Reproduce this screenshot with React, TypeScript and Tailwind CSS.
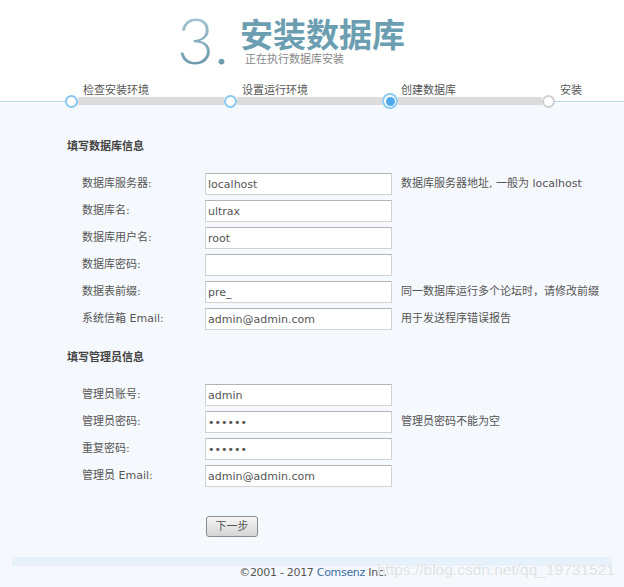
import React from "react";

const font = "font-['DejaVu_Sans','Noto_Sans_CJK_SC',sans-serif]";

function DoneDot() {
  return <div className="w-[13px] h-[13px] flex-none rounded-full border-2 border-[#86c6ef] bg-white" />;
}
function ActiveDot() {
  return (
    <div className="w-[16px] h-[16px] flex-none rounded-full border-2 border-[#8ccbf1] bg-white flex items-center justify-center">
      <div className="w-[9px] h-[9px] rounded-full bg-[#4fa9ea]" />
    </div>
  );
}
function TodoDot() {
  return <div className="w-[13px] h-[13px] flex-none rounded-full border-2 border-[#cfcfcf] bg-white" />;
}

type Row = { label: string; value: string; hint?: string; password?: boolean };

const dbRows: Row[] = [
  { label: "数据库服务器:", value: "localhost", hint: "数据库服务器地址, 一般为 localhost" },
  { label: "数据库名:", value: "ultrax" },
  { label: "数据库用户名:", value: "root" },
  { label: "数据库密码:", value: "" },
  { label: "数据表前缀:", value: "pre_", hint: "同一数据库运行多个论坛时，请修改前缀" },
  { label: "系统信箱 Email:", value: "admin@admin.com", hint: "用于发送程序错误报告" },
];

const adminRows: Row[] = [
  { label: "管理员账号:", value: "admin" },
  { label: "管理员密码:", value: "123456", hint: "管理员密码不能为空", password: true },
  { label: "重复密码:", value: "123456", password: true },
  { label: "管理员 Email:", value: "admin@admin.com" },
];

function FormRows({ rows }: { rows: Row[] }) {
  return (
    <div className="flex flex-col gap-[5px]">
      {rows.map((r) => (
        <div key={r.label} className="flex items-center h-[22px]">
          <div className="w-[138px] pl-[15px] flex-none text-[11px] text-[#555] whitespace-nowrap">{r.label}</div>
          <input
            type={r.password ? "password" : "text"}
            value={r.value}
            readOnly
            className={`w-[187px] h-[22px] flex-none bg-white border border-[#d2d2d2] border-t-[#b4b4b4] px-[2px] text-[11px] text-[#555] outline-none ${font}`}
          />
          {r.hint && <div className="ml-[9px] text-[11px] text-[#555] whitespace-nowrap">{r.hint}</div>}
        </div>
      ))}
    </div>
  );
}

export default function App() {
  return (
    <div className={`relative w-[624px] h-[587px] overflow-hidden bg-[#f5f9fd] ${font}`}>
      {/* header */}
      <div className="bg-white h-[85px] flex pl-[177px] pt-[4px]">
        <div className="flex-none w-[63px] h-[72px]">
          <span className="block font-['Lato',sans-serif] font-light text-[64px] leading-[72px] bg-[linear-gradient(to_bottom,#b3d0da,#5e90a4)] bg-clip-text text-transparent">
            3.
          </span>
        </div>
        <div className="flex flex-col pt-[10px]">
          <div className="text-[33px] leading-[38px] font-bold text-[#6b9eb1] font-['Noto_Sans_CJK_SC',sans-serif]">安装数据库</div>
          <div className="pl-[5px] mt-[2px] text-[11px] leading-[12px] text-[#888]">正在执行数据库安装</div>
        </div>
      </div>
      {/* step labels */}
      <div className="bg-white flex h-[12px] pl-[83px] -mb-[4px] text-[11px] leading-[12px] text-[#555]">
        <div className="w-[159px] flex-none">检查安装环境</div>
        <div className="w-[159px] flex-none">设置运行环境</div>
        <div className="w-[159px] flex-none">创建数据库</div>
        <div className="w-[159px] flex-none">安装</div>
      </div>
      {/* progress bar */}
      <div className="flex items-center h-[16px] bg-[linear-gradient(to_bottom,#ffffff_0%,#ffffff_60%,#f5f9fd_60%)]">
        <div className="w-[65px] h-px bg-[#b3d4ea] flex-none" />
        <DoneDot />
        <div className="w-[146px] h-[8px] bg-[#dcdcdc] flex-none" />
        <DoneDot />
        <div className="w-[145px] h-[8px] bg-[#dcdcdc] flex-none" />
        <ActiveDot />
        <div className="w-[144px] h-[8px] bg-[#dcdcdc] flex-none" />
        <TodoDot />
        <div className="flex-1 h-px bg-[#b3d4ea]" />
      </div>
      {/* body */}
      <div className="pl-[67px]">
        <div className="mt-[30px] h-[16px] leading-[16px] text-[11px] font-bold text-[#444]">填写数据库信息</div>
        <div className="mt-[18px]">
          <FormRows rows={dbRows} />
        </div>
        <div className="mt-[20px] h-[16px] leading-[16px] text-[11px] font-bold text-[#444]">填写管理员信息</div>
        <div className="mt-[18px]">
          <FormRows rows={adminRows} />
        </div>
        <div className="mt-[26px] pl-[139px]">
          <button className="w-[52px] h-[21px] rounded-[3px] border border-[#8c8c8c] bg-[linear-gradient(to_bottom,#f6f6f6,#d4d4d4)] text-[11px] text-[#555] leading-[19px]">
            下一步
          </button>
        </div>
      </div>
      {/* footer */}
      <div className="mt-[20px] mx-[12px] h-[9px] bg-[#e7f1f9]" />
      <div className="text-center text-[11px] leading-[14px] text-[#555] pl-[2px] tracking-[-0.3px]">
        ©2001 - 2017 <span className="text-[#3a6ea5]">Comsenz</span> Inc.
      </div>
      {/* watermark */}
      <div className="absolute left-[377px] top-[559px] font-['Liberation_Sans',sans-serif] text-[15.5px] leading-[22px] text-[#dde2e6] [text-shadow:0_0_1px_#ffffff]">
        https://blog.csdn.net/qq_19731521
      </div>
    </div>
  );
}
